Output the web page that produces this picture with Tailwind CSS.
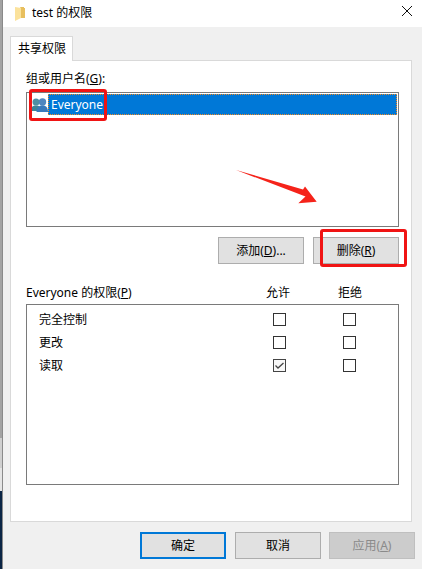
<!DOCTYPE html>
<html lang="zh-CN">
<head>
    <meta charset="UTF-8">
    <title>test 的权限</title>
    <script src="https://cdn.jsdelivr.net/npm/@tailwindcss/browser@4"></script>
</head>
<body class="relative flex w-[422px] h-[569px] overflow-hidden bg-[#f0f0f0] text-[12px] text-black font-['Noto_Sans','Noto_Sans_CJK_SC',sans-serif]">
    <!-- Desktop behind the window -->
    <div class="flex flex-col w-[2px] shrink-0">
        <div class="h-[438px] bg-[#a3a3a3]"></div>
        <div class="h-[30px] bg-[#cfcfcf]"></div>
        <div class="h-[23px] bg-[#e4e4e4]"></div>
        <div class="flex-1 bg-[#0b2545]"></div>
    </div>

    <div class="flex flex-col flex-1 border-l border-[#8a8a8a] min-h-[569px]">
        <!-- Title bar -->
        <div class="relative flex items-center h-[27px] bg-white pl-[11px] pb-[2px] shrink-0">
            <svg class="w-[14px] h-[16px] mr-[4px]" viewBox="0 0 14 16">
                <path d="M6 2h4v1h1v10H7V4z" fill="#e8bf5e"/>
                <path d="M1 2l6 1v10l-6 3z" fill="#fbe29c"/>
            </svg>
            <span class="leading-none">test 的权限</span>
            <svg class="absolute right-[10px] top-[6px] w-[10px] h-[10px]" viewBox="0 0 10 10">
                <path d="M0 0l10 10M10 0L0 10" stroke="#111" stroke-width="1" fill="none"/>
            </svg>
        </div>

        <div class="flex flex-col flex-1 pl-[7px] pr-[7px]">
            <!-- Tab -->
            <div class="flex h-[33px] items-end shrink-0">
                <div class="relative z-10 -mb-px flex items-center h-[25px] w-[63px] pl-[7px] bg-white border border-b-0 border-[#d9d9d9]">共享权限</div>
            </div>

            <!-- Tab panel -->
            <div class="flex flex-col h-[462px] w-[402px] bg-white border border-[#d9d9d9] pl-[15px] pr-[12px] shrink-0">
                <div class="h-[31px] pt-[10px] leading-[16px]">组或用户名(<span class="underline">G</span>):</div>

                <div class="h-[135px] border border-[#7a7a7a] p-px shrink-0">
                    <div class="flex items-center h-[21px]">
                        <svg class="w-[17px] h-[16px] ml-[3px] shrink-0" viewBox="0 0 17 16">
                            <circle cx="5" cy="5" r="3.500" fill="#4f8fa3"/>
                            <path d="M0 14c0-4 1.500-5.500 5-5.500s5 1.500 5 5.500z" fill="#3f8496"/>
                            <circle cx="11.500" cy="5" r="3.700" fill="#4f86bf"/>
                            <path d="M5.500 15c0-4 2-6.500 6-6.500s5.500 2.500 5.500 6.500z" fill="#3a7abb"/>
                        </svg>
                        <div class="flex items-center flex-1 h-[21px] bg-[#0078d7] text-white border border-dotted border-[#f08a24] pl-[2px]">Everyone</div>
                    </div>
                </div>

                <div class="flex justify-end gap-[9px] mt-[10px] shrink-0">
                    <button class="w-[86px] h-[27px] bg-[#e1e1e1] border border-[#adadad]">添加(<span class="underline">D</span>)...</button>
                    <button class="w-[86px] h-[27px] bg-[#e1e1e1] border border-[#adadad]">删除(<span class="underline">R</span>)</button>
                </div>

                <div class="flex items-center h-[40px] pt-[18px] shrink-0">
                    <span class="w-[240px]">Everyone 的权限(<span class="underline">P</span>)</span>
                    <span class="w-[72px]">允许</span>
                    <span>拒绝</span>
                </div>

                <div class="h-[181px] border border-[#7a7a7a] pt-[3px] shrink-0">
                    <div class="flex items-center h-[23px]">
                        <span class="w-[218px] pl-[12px]">完全控制</span>
                        <span class="flex w-[70px] pl-[28px]"><span class="w-[13px] h-[13px] border border-[#333]"></span></span>
                        <span class="flex w-[70px] pl-[28px]"><span class="w-[13px] h-[13px] border border-[#333]"></span></span>
                    </div>
                    <div class="flex items-center h-[23px]">
                        <span class="w-[218px] pl-[12px]">更改</span>
                        <span class="flex w-[70px] pl-[28px]"><span class="w-[13px] h-[13px] border border-[#333]"></span></span>
                        <span class="flex w-[70px] pl-[28px]"><span class="w-[13px] h-[13px] border border-[#333]"></span></span>
                    </div>
                    <div class="flex items-center h-[23px]">
                        <span class="w-[218px] pl-[12px]">读取</span>
                        <span class="flex w-[70px] pl-[28px]">
                            <span class="w-[13px] h-[13px] border border-[#444] bg-[#f8f8f8]">
                                <svg class="w-[11px] h-[11px]" viewBox="0 0 11 11"><path d="M1.500 5.500l2.500 2.500 5.500-5" stroke="#444" stroke-width="1.300" fill="none"/></svg>
                            </span>
                        </span>
                        <span class="flex w-[70px] pl-[28px]"><span class="w-[13px] h-[13px] border border-[#333]"></span></span>
                    </div>
                </div>
            </div>

            <!-- Footer buttons -->
            <div class="flex pl-[130px] pt-[10px]">
                <button class="w-[86px] h-[27px] mr-[9px] bg-[#e1e1e1] border-2 border-[#0078d7]">确定</button>
                <button class="w-[86px] h-[27px] mr-[8px] bg-[#e1e1e1] border border-[#adadad]">取消</button>
                <button class="w-[86px] h-[27px] bg-[#cccccc] border border-[#bfbfbf] text-[#8a8a8a]">应用(<span class="underline">A</span>)</button>
            </div>
        </div>
    </div>

    <!-- Red annotations on top of the screenshot -->
    <div class="absolute left-[29px] top-[89px] w-[78px] h-[32px] border-[3px] border-[#f01414] rounded-[3px]"></div>
    <div class="absolute left-[320px] top-[229px] w-[87px] h-[38px] border-[3px] border-[#f01414] rounded-[3px]"></div>
    <svg class="absolute left-[230px] top-[165px] w-[95px] h-[45px]" viewBox="0 0 95 45">
        <path d="M6 5L73 24.500 75 21.500 86.700 36.700 68.300 38.300 75.500 31.500z" fill="#f5231a"/>
    </svg>
</body>
</html>
